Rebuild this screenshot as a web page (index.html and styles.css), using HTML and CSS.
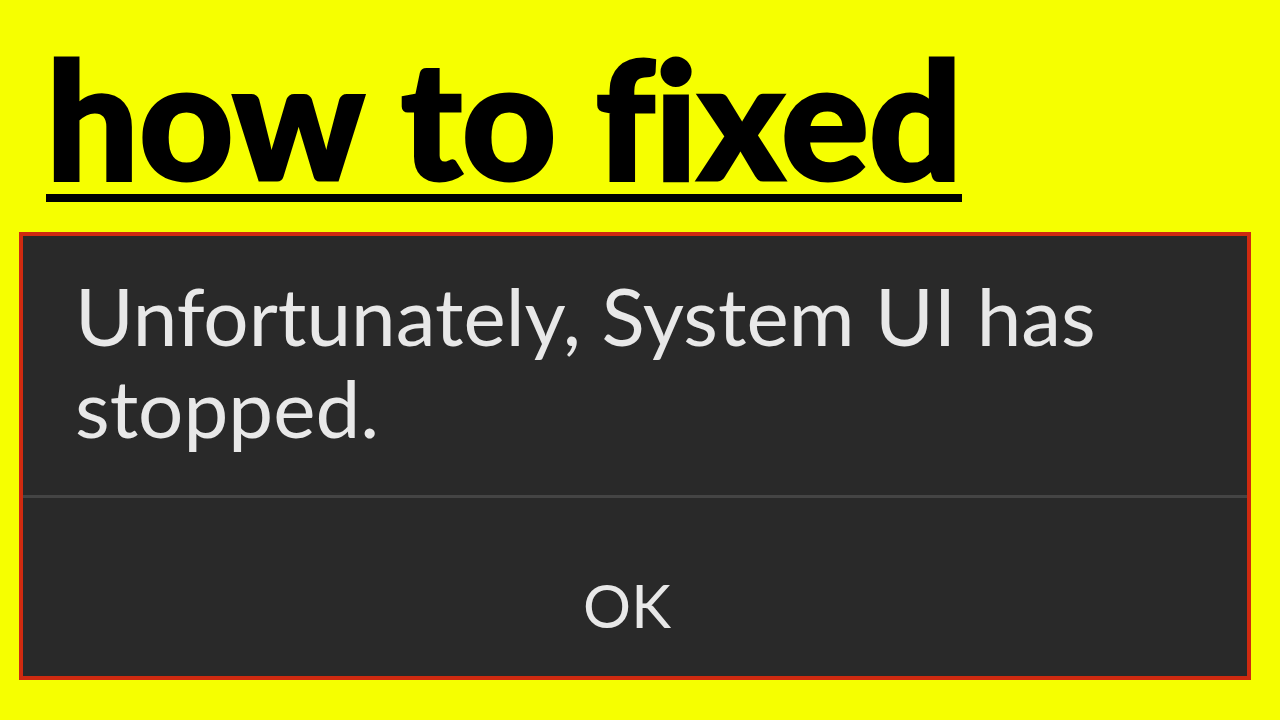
FILE: index.html
```html
<!DOCTYPE html>
<html lang="en">
<head>
<meta charset="utf-8">
<meta name="viewport" content="width=device-width, initial-scale=1">
<title>how to fixed</title>
<link rel="stylesheet" href="styles.css">
</head>
<body>
<main class="page">
  <h1 class="title"><span class="title-text">how to fixed</span></h1>
  <section class="dialog" role="alertdialog" aria-labelledby="message">
    <p class="message" id="message">Unfortunately, System UI has stopped.</p>
    <button class="ok" type="button">OK</button>
  </section>
</main>
</body>
</html>
```

FILE: styles.css
```css
* {
  box-sizing: border-box;
}

body {
  margin: 0;
  background: #f6ff00;
}

.page {
  display: flex;
  flex-direction: column;
  min-height: 100vh;
  padding: 40px 29px 40px 19px;
}

.title {
  margin: 0;
  padding: 0 0 30px 27px;
  color: #000;
  font: 900 164px/154px Lato, sans-serif;
  font-variant-ligatures: none;
  white-space: nowrap;
}

.title-text {
  display: block;
  width: fit-content;
  border-bottom: 8px solid #000;
  -webkit-text-stroke: 3px #000;
}

.dialog {
  display: flex;
  flex: 1;
  flex-direction: column;
  border: 4px solid #cf2a10;
  background: #292929;
  color: #e8e8e8;
  font-family: Lato, sans-serif;
}

.message {
  margin: 0;
  padding: 33px 80px 42px 52px;
  border-bottom: 3px solid #444;
  font-size: 80px;
  line-height: 92px;
}

.ok {
  flex: 1;
  border: 0;
  padding: 36px 16px 0 0;
  background: transparent;
  color: inherit;
  font: 60px/72px Lato, sans-serif;
}
```
